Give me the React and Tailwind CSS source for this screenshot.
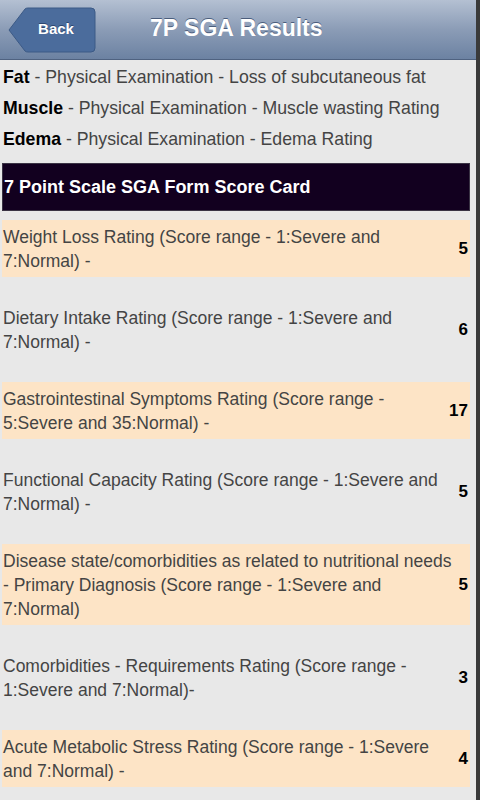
import React from 'react';

const rows = [
  { text: 'Weight Loss Rating (Score range - 1:Severe and 7:Normal) -', score: 5, shaded: true },
  { text: 'Dietary Intake Rating (Score range - 1:Severe and 7:Normal) -', score: 6 },
  { text: 'Gastrointestinal Symptoms Rating (Score range - 5:Severe and 35:Normal) -', score: 17, shaded: true },
  { text: 'Functional Capacity Rating (Score range - 1:Severe and 7:Normal) -', score: 5 },
  { text: 'Disease state/comorbidities as related to nutritional needs - Primary Diagnosis (Score range - 1:Severe and 7:Normal)', score: 5, shaded: true },
  { text: 'Comorbidities - Requirements Rating (Score range - 1:Severe and 7:Normal)-', score: 3 },
  { text: 'Acute Metabolic Stress Rating (Score range - 1:Severe and 7:Normal) -', score: 4, shaded: true },
];

const legend = [
  { label: 'Fat', desc: 'Physical Examination - Loss of subcutaneous fat' },
  { label: 'Muscle', desc: 'Physical Examination - Muscle wasting Rating' },
  { label: 'Edema', desc: 'Physical Examination - Edema Rating' },
];

const App = () => {
  return (
    <div
      className="w-[480px] h-[800px] overflow-hidden bg-[#e8e8e8] flex"
      style={{ fontFamily: '"Liberation Sans", Arial, sans-serif' }}
    >
      <div className="flex-1 flex flex-col min-w-0">
        {/* Header */}
        <header className="h-[60px] shrink-0 flex items-center relative bg-gradient-to-b from-[#b4c0d2] via-[#8b9cb6] to-[#6c82a2] border-b border-[#4f6280]">
          <button className="ml-[8px] h-[46px] w-[88px] relative flex items-center justify-center">
            <svg className="absolute inset-0" width="88" height="46" viewBox="0 0 88 46">
              <path
                d="M1 23 L17 2 Q18 1 20 1 L83 1 Q87 1 87 5 L87 41 Q87 45 83 45 L20 45 Q18 45 17 44 Z"
                fill="#4b6c9c"
                stroke="#3c5a86"
                strokeWidth="1"
              />
            </svg>
            <span className="relative text-white font-bold text-[15px] pl-[8px] [text-shadow:0_-1px_0_#2d4670]">Back</span>
          </button>
          <h1 className="absolute left-[150px] top-[13px] text-white font-bold text-[23px] leading-[30px] [text-shadow:0_-1px_0_#4a5d7c]">
            7P SGA Results
          </h1>
        </header>

        {/* Content */}
        <div className="pt-[2px] pl-[3px] pr-[6px]">
          {legend.map((l) => (
            <p key={l.label} className="text-[17.7px] leading-[31px] text-[#444]">
              <span className="font-bold text-black">{l.label}</span> - {l.desc}
            </p>
          ))}

          <div className="mt-[8px] -ml-[1px] h-[48px] bg-[#12001f] border border-[#3a3344] flex items-center">
            <span className="text-white font-bold text-[18px] pl-[1px]">7 Point Scale SGA Form Score Card</span>
          </div>

          <div className="mt-[9px] flex flex-col gap-[24px]">
            {rows.map((r, i) => (
              <div
                key={i}
                className={`-ml-[1px] flex items-center py-[4.5px] ${r.shaded ? 'bg-[#fde4c6]' : ''}`}
              >
                <span className="flex-1 pl-[1px] pr-[2px] text-[17.5px] leading-[24px] text-[#444]">{r.text}</span>
                <span className="w-[14px] pr-[2px] font-bold text-[17px] text-black whitespace-nowrap flex justify-end">{r.score}</span>
              </div>
            ))}
          </div>
        </div>
      </div>
      {/* right edge bar */}
      <div className="w-[4px] shrink-0 bg-[#3a3a3a]" />
    </div>
  );
};

export default App;
